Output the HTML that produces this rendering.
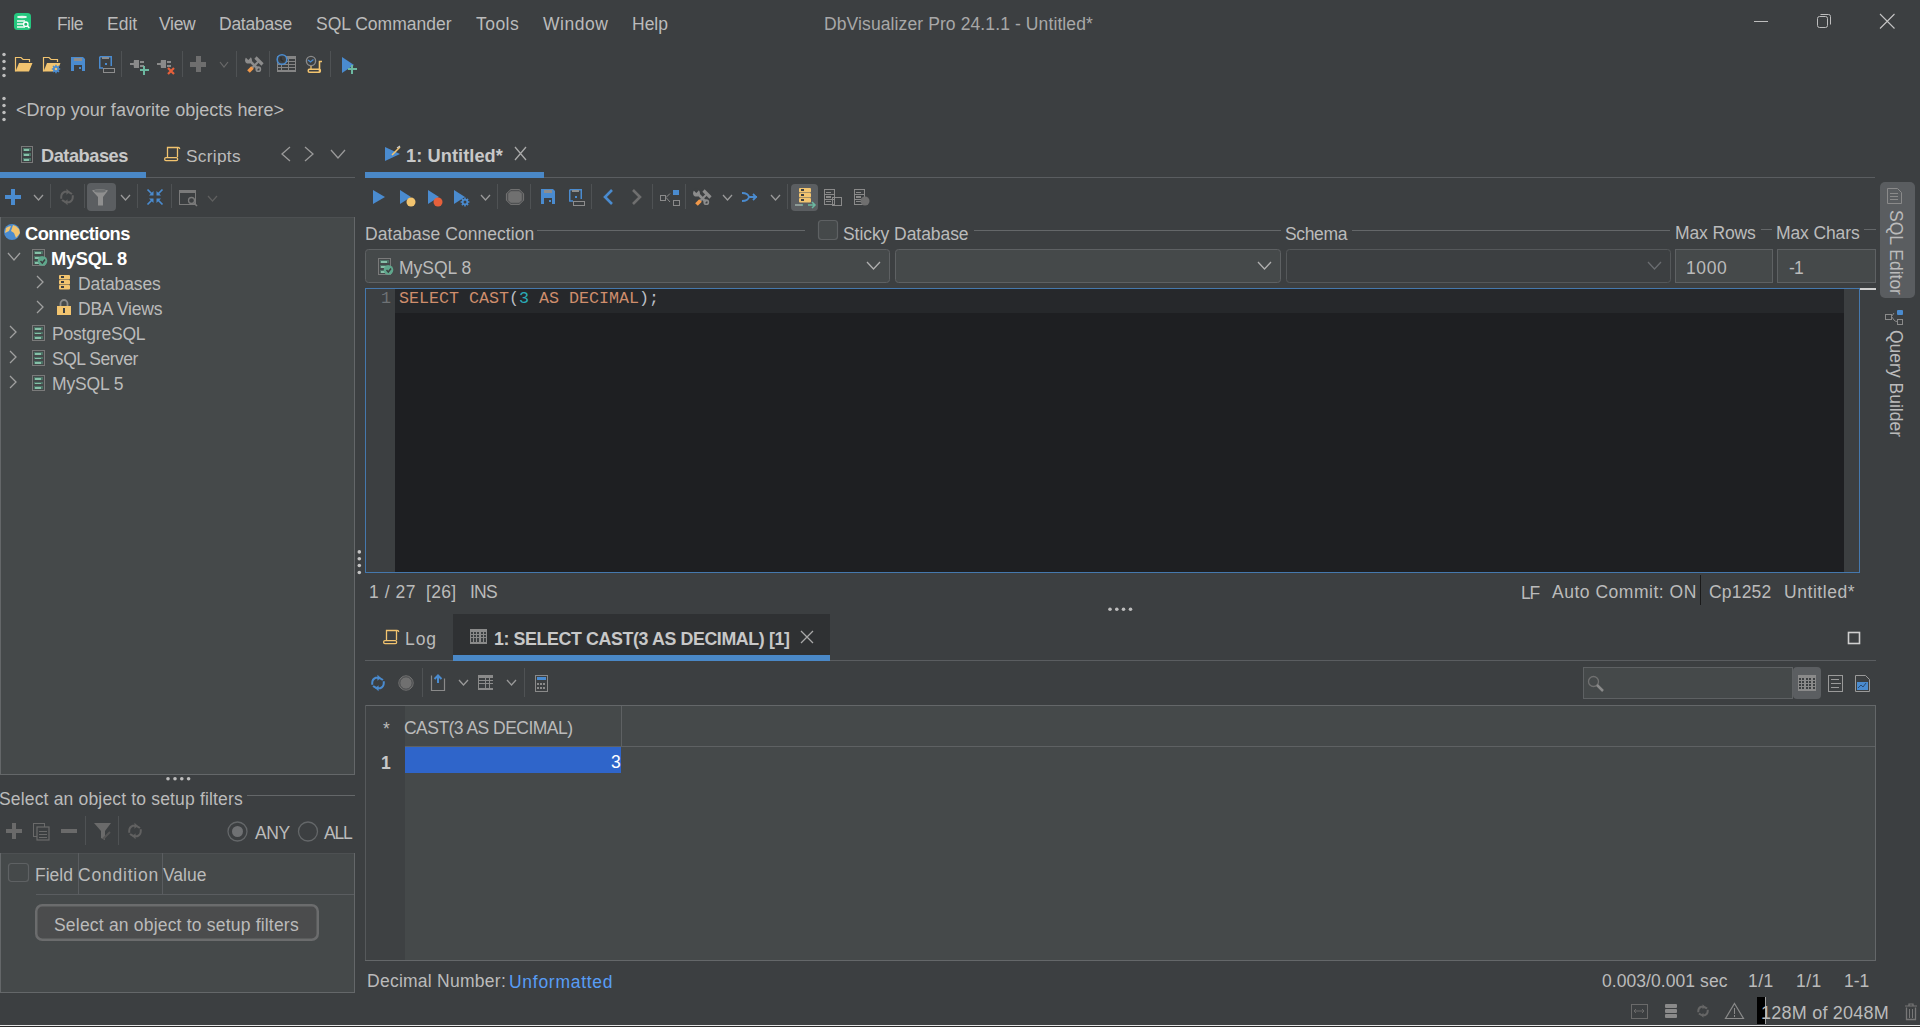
<!DOCTYPE html>
<html><head><meta charset="utf-8"><style>
*{margin:0;padding:0;box-sizing:border-box}
html,body{width:1920px;height:1027px;overflow:hidden;background:#3c3f41}
.t{position:absolute;white-space:pre;line-height:1;font-family:"Liberation Sans",sans-serif}
svg{position:absolute;left:0;top:0}
</style></head><body>
<svg width="1920" height="1027" viewBox="0 0 1920 1027">
<rect x="0" y="172" width="146" height="6" rx="0" fill="#4a88c7" shape-rendering="crispEdges"/>
<rect x="146" y="177" width="209" height="1" fill="#5a5d60" shape-rendering="crispEdges"/>
<rect x="0" y="217" width="355" height="558" rx="0" fill="#45494a" shape-rendering="crispEdges"/>
<rect x="0" y="217" width="355" height="1" fill="#4d5052" shape-rendering="crispEdges"/>
<rect x="0" y="217" width="1" height="558" fill="#646769" shape-rendering="crispEdges"/>
<rect x="354" y="217" width="1" height="558" fill="#646769" shape-rendering="crispEdges"/>
<rect x="0" y="774" width="355" height="1" fill="#646769" shape-rendering="crispEdges"/>
<rect x="247" y="795" width="108" height="1" fill="#646769" shape-rendering="crispEdges"/>
<rect x="0" y="853" width="355" height="140" rx="0" fill="#45494a" shape-rendering="crispEdges"/>
<rect x="0" y="853" width="355" height="1" fill="#4d5052" shape-rendering="crispEdges"/>
<rect x="0" y="853" width="1" height="140" fill="#646769" shape-rendering="crispEdges"/>
<rect x="354" y="853" width="1" height="140" fill="#646769" shape-rendering="crispEdges"/>
<rect x="0" y="992" width="355" height="1" fill="#646769" shape-rendering="crispEdges"/>
<rect x="36.25" y="905.25" width="281.5" height="34.5" rx="6" fill="#4b4c4d" stroke="#6b6c6d" stroke-width="2.5"/>
<rect x="365" y="172" width="179" height="6" rx="0" fill="#4a88c7" shape-rendering="crispEdges"/>
<rect x="544" y="177" width="1331" height="1" fill="#5a5d60" shape-rendering="crispEdges"/>
<rect x="365.5" y="288.5" width="1494" height="284" fill="#1e1f22" stroke="#4578ad" stroke-width="1"/>
<rect x="366" y="289" width="29" height="283" rx="0" fill="#3c3f41" shape-rendering="crispEdges"/>
<rect x="1844" y="289" width="15" height="283" rx="0" fill="#3c3f41" shape-rendering="crispEdges"/>
<rect x="395" y="289" width="1449" height="24" rx="0" fill="#26282b" shape-rendering="crispEdges"/>
<rect x="453" y="614" width="377" height="41" rx="0" fill="#2f3133" shape-rendering="crispEdges"/>
<rect x="453" y="655" width="377" height="6" rx="0" fill="#4a88c7" shape-rendering="crispEdges"/>
<rect x="365" y="660" width="88" height="1" fill="#5a5d60" shape-rendering="crispEdges"/>
<rect x="830" y="660" width="1046" height="1" fill="#5a5d60" shape-rendering="crispEdges"/>
<rect x="365" y="705" width="1511" height="256" rx="0" fill="#45494a" shape-rendering="crispEdges"/>
<rect x="365" y="705" width="1511" height="1" fill="#646769" shape-rendering="crispEdges"/>
<rect x="365" y="705" width="1" height="256" fill="#56595b" shape-rendering="crispEdges"/>
<rect x="1875" y="705" width="1" height="256" fill="#646769" shape-rendering="crispEdges"/>
<rect x="365" y="960" width="1511" height="1" fill="#646769" shape-rendering="crispEdges"/>
<rect x="366" y="706" width="39" height="254" rx="0" fill="#3e4143" shape-rendering="crispEdges"/>
<rect x="405" y="746" width="1470" height="1" fill="#5e6163" shape-rendering="crispEdges"/>
<rect x="621" y="706" width="1" height="40" fill="#5e6163" shape-rendering="crispEdges"/>
<rect x="405" y="747" width="216" height="26" rx="0" fill="#2f65ca" shape-rendering="crispEdges"/>
<rect x="1757" y="997" width="8" height="27" rx="0" fill="#000000" shape-rendering="crispEdges"/>
<rect x="1765" y="997" width="1" height="27" fill="#a0a0a0" shape-rendering="crispEdges"/>
<rect x="0" y="1025" width="1920" height="1" fill="#e6e6e6" shape-rendering="crispEdges"/>
<rect x="0" y="1026" width="1920" height="1" fill="#2b2b2b" shape-rendering="crispEdges"/>
<rect x="1880" y="182" width="35" height="116" rx="5" fill="#5a5d60"/>
<rect x="14" y="13" width="17" height="17" rx="3.5" fill="#25c77f"/>
<ellipse cx="22" cy="17" rx="5" ry="1.2" fill="#e8f8ef"/>
<rect x="17" y="20.3" width="8" height="1.3" fill="#bfeed6" shape-rendering="crispEdges"/>
<rect x="17" y="23.3" width="8" height="1.3" fill="#bfeed6" shape-rendering="crispEdges"/>
<rect x="17" y="26.3" width="8" height="1.3" fill="#bfeed6" shape-rendering="crispEdges"/>
<circle cx="25.8" cy="24.2" r="2.2" fill="#1fb56f" stroke="#ffffff" stroke-width="1.3"/>
<path d="M27.3 25.8L29.3 28" fill="none" stroke="#ffffff" stroke-width="1.5" />
<rect x="1754" y="21" width="14" height="1" fill="#bdbdbd" shape-rendering="crispEdges"/>
<rect x="1817.5" y="16.5" width="10" height="11" rx="2" fill="none" stroke="#bdbdbd" stroke-width="1"/>
<path d="M1820.5 14.5H1828.5Q1830.5 14.5 1830.5 16.5V24.5" fill="none" stroke="#bdbdbd" stroke-width="1" />
<path d="M1880 14L1894.5 28.5M1894.5 14L1880 28.5" fill="none" stroke="#c4c4c4" stroke-width="1.1" />
<circle cx="4" cy="54.5" r="1.75" fill="#bdbdbd"/>
<circle cx="4" cy="61.5" r="1.75" fill="#bdbdbd"/>
<circle cx="4" cy="68.5" r="1.75" fill="#bdbdbd"/>
<circle cx="4" cy="75.5" r="1.75" fill="#bdbdbd"/>
<path d="M15.5 71.5V57.5H21L23 59.5H29.5V62" fill="none" stroke="#f2c46f" stroke-width="1.2" />
<path d="M15.5 71.5L19 63H32.5L29 71.5Z" fill="#f2c46f" />
<path d="M43.5 71.5V57.5H49L51 59.5H57.5V62" fill="none" stroke="#f2c46f" stroke-width="1.2" />
<path d="M43.5 71.5L47 63H60.5L57 71.5Z" fill="#f2c46f" />
<circle cx="56" cy="69" r="2.2" fill="none" stroke="#4a8bcf" stroke-width="1.8"/>
<line x1="58.70" y1="69.00" x2="60.20" y2="69.00" stroke="#4a8bcf" stroke-width="1.5"/>
<line x1="57.91" y1="70.91" x2="58.97" y2="71.97" stroke="#4a8bcf" stroke-width="1.5"/>
<line x1="56.00" y1="71.70" x2="56.00" y2="73.20" stroke="#4a8bcf" stroke-width="1.5"/>
<line x1="54.09" y1="70.91" x2="53.03" y2="71.97" stroke="#4a8bcf" stroke-width="1.5"/>
<line x1="53.30" y1="69.00" x2="51.80" y2="69.00" stroke="#4a8bcf" stroke-width="1.5"/>
<line x1="54.09" y1="67.09" x2="53.03" y2="66.03" stroke="#4a8bcf" stroke-width="1.5"/>
<line x1="56.00" y1="66.30" x2="56.00" y2="64.80" stroke="#4a8bcf" stroke-width="1.5"/>
<line x1="57.91" y1="67.09" x2="58.97" y2="66.03" stroke="#4a8bcf" stroke-width="1.5"/>
<path d="M71 57H83L85 59V71H71Z" fill="#4a8bcf" />
<rect x="74" y="58" width="8" height="3" rx="0" fill="#8d8d8d" shape-rendering="crispEdges"/>
<rect x="74" y="65" width="8" height="6" rx="0" fill="#3c3f41" shape-rendering="crispEdges"/>
<rect x="79" y="67" width="2" height="2" rx="0" fill="#4a8bcf" shape-rendering="crispEdges"/>
<path d="M99.75 56.75H111.25V66M99.75 56.75V68H103" fill="none" stroke="#4a8bcf" stroke-width="1.5" />
<rect x="102" y="57" width="7" height="2" rx="0" fill="#8d8d8d" shape-rendering="crispEdges"/>
<rect x="105" y="63" width="2" height="2" rx="0" fill="#4a8bcf" shape-rendering="crispEdges"/>
<rect x="103.5" y="68.5" width="11" height="4" rx="0" fill="none" stroke="#8d8d8d" stroke-width="1"/>
<rect x="121" y="51" width="1" height="26" fill="#4f5254" shape-rendering="crispEdges"/>
<rect x="130" y="63" width="4" height="2" rx="0" fill="#8a8a8a" shape-rendering="crispEdges"/>
<path d="M134 60H139V68H134Q133 64 134 60Z" fill="#8a8a8a" />
<rect x="140" y="61" width="4" height="2" rx="0" fill="#8a8a8a" shape-rendering="crispEdges"/>
<rect x="140" y="65" width="4" height="2" rx="0" fill="#8a8a8a" shape-rendering="crispEdges"/>
<rect x="139.5" y="68.9" width="9" height="2.2" rx="0" fill="#6cb8a0" shape-rendering="crispEdges"/>
<rect x="142.9" y="65.5" width="2.2" height="9" rx="0" fill="#6cb8a0" shape-rendering="crispEdges"/>
<rect x="157" y="63" width="4" height="2" rx="0" fill="#8a8a8a" shape-rendering="crispEdges"/>
<path d="M161 60H166V68H161Q160 64 161 60Z" fill="#8a8a8a" />
<rect x="167" y="61" width="4" height="2" rx="0" fill="#8a8a8a" shape-rendering="crispEdges"/>
<rect x="167" y="65" width="4" height="2" rx="0" fill="#8a8a8a" shape-rendering="crispEdges"/>
<path d="M168 68L174 74M174 68L168 74" fill="none" stroke="#e5603b" stroke-width="2.2" />
<rect x="182" y="51" width="1" height="26" fill="#4f5254" shape-rendering="crispEdges"/>
<rect x="190.0" y="61.5" width="16" height="5" rx="0" fill="#6e6e6e" shape-rendering="crispEdges"/>
<rect x="195.5" y="56.0" width="5" height="16" rx="0" fill="#6e6e6e" shape-rendering="crispEdges"/>
<path d="M220 62L224.0 67L228 62" fill="none" stroke="#6a6a6a" stroke-width="1.2" />
<rect x="236" y="51" width="1" height="26" fill="#4f5254" shape-rendering="crispEdges"/>
<g transform="translate(-448,-133)">
<path d="M697.5 193.5L706 202" fill="none" stroke="#8c8c8c" stroke-width="2.6" />
<circle cx="696.5" cy="193.2" r="3.4" fill="#8c8c8c"/>
<path d="M693.5 190.2L696.3 193L698.8 190.5L696 187.7Z" fill="#3c3f41" />
<circle cx="706.3" cy="202.2" r="2.1" fill="none" stroke="#8c8c8c" stroke-width="1.6"/>
<path d="M703.5 190.5L710.5 197.5" fill="none" stroke="#8c8c8c" stroke-width="3.2" />
<path d="M707 194L699.5 201.5" fill="none" stroke="#8c8c8c" stroke-width="2" />
<path d="M700.5 200.5L696.5 204.5" fill="none" stroke="#f0984a" stroke-width="3.8" />
</g>
<rect x="269" y="51" width="1" height="26" fill="#4f5254" shape-rendering="crispEdges"/>
<rect x="277" y="56" width="19" height="16" rx="0" fill="#858585" shape-rendering="crispEdges"/>
<rect x="278" y="59" width="3" height="2" rx="0" fill="#3c3f41" shape-rendering="crispEdges"/>
<rect x="278" y="62" width="3" height="2" rx="0" fill="#3c3f41" shape-rendering="crispEdges"/>
<rect x="278" y="65" width="3" height="2" rx="0" fill="#3c3f41" shape-rendering="crispEdges"/>
<rect x="278" y="68" width="3" height="2" rx="0" fill="#3c3f41" shape-rendering="crispEdges"/>
<rect x="282" y="59" width="3" height="2" rx="0" fill="#3c3f41" shape-rendering="crispEdges"/>
<rect x="282" y="62" width="3" height="2" rx="0" fill="#3c3f41" shape-rendering="crispEdges"/>
<rect x="282" y="65" width="3" height="2" rx="0" fill="#3c3f41" shape-rendering="crispEdges"/>
<rect x="282" y="68" width="3" height="2" rx="0" fill="#3c3f41" shape-rendering="crispEdges"/>
<rect x="285" y="59" width="3" height="2" rx="0" fill="#3c3f41" shape-rendering="crispEdges"/>
<rect x="285" y="62" width="3" height="2" rx="0" fill="#3c3f41" shape-rendering="crispEdges"/>
<rect x="285" y="65" width="3" height="2" rx="0" fill="#3c3f41" shape-rendering="crispEdges"/>
<rect x="285" y="68" width="3" height="2" rx="0" fill="#3c3f41" shape-rendering="crispEdges"/>
<rect x="289" y="59" width="3" height="2" rx="0" fill="#3c3f41" shape-rendering="crispEdges"/>
<rect x="289" y="62" width="3" height="2" rx="0" fill="#3c3f41" shape-rendering="crispEdges"/>
<rect x="289" y="65" width="3" height="2" rx="0" fill="#3c3f41" shape-rendering="crispEdges"/>
<rect x="289" y="68" width="3" height="2" rx="0" fill="#3c3f41" shape-rendering="crispEdges"/>
<rect x="292" y="59" width="3" height="2" rx="0" fill="#3c3f41" shape-rendering="crispEdges"/>
<rect x="292" y="62" width="3" height="2" rx="0" fill="#3c3f41" shape-rendering="crispEdges"/>
<rect x="292" y="65" width="3" height="2" rx="0" fill="#3c3f41" shape-rendering="crispEdges"/>
<rect x="292" y="68" width="3" height="2" rx="0" fill="#3c3f41" shape-rendering="crispEdges"/>
<circle cx="282" cy="59.5" r="4.8" fill="#3c3f41" stroke="#4a8bcf" stroke-width="1.6"/>
<path d="M281 57V60L283.5 61.5" fill="none" stroke="#2b2b2b" stroke-width="1.2" />
<circle cx="311" cy="61" r="4.6" fill="#3c3f41" stroke="#8a8a8a" stroke-width="1.4"/>
<path d="M308 60L310.5 62L313.5 59.5" fill="none" stroke="#4a8bcf" stroke-width="1.3" />
<path d="M311 66V70" fill="none" stroke="#f2c46f" stroke-width="1.2" />
<path d="M319.5 72V61.5H322" fill="none" stroke="#f2c46f" stroke-width="1.6" />
<rect x="308.3" y="69.3" width="12" height="3" rx="1" fill="none" stroke="#f2c46f" stroke-width="1.5"/>
<rect x="330" y="51" width="1" height="26" fill="#4f5254" shape-rendering="crispEdges"/>
<path d="M342 57L354 65.0L342 73Z" fill="#4a8bcf" />
<rect x="347.5" y="67.9" width="9" height="2.2" rx="0" fill="#6cb8a0" shape-rendering="crispEdges"/>
<rect x="350.9" y="64.5" width="2.2" height="9" rx="0" fill="#6cb8a0" shape-rendering="crispEdges"/>
<circle cx="4" cy="98.5" r="1.75" fill="#bdbdbd"/>
<circle cx="4" cy="105.5" r="1.75" fill="#bdbdbd"/>
<circle cx="4" cy="112.5" r="1.75" fill="#bdbdbd"/>
<circle cx="4" cy="119.5" r="1.75" fill="#bdbdbd"/>
<rect x="21.5" y="146.5" width="11" height="16" rx="0" fill="none" stroke="#7a7a7a" stroke-width="1"/>
<rect x="22.5" y="148.0" width="8.5" height="3.0" rx="0" fill="#4c7366" shape-rendering="crispEdges"/>
<rect x="24" y="149.0" width="5" height="1.5" rx="0" fill="#86c0a8" shape-rendering="crispEdges"/>
<rect x="22.5" y="153.0" width="8.5" height="3.0" rx="0" fill="#4c7366" shape-rendering="crispEdges"/>
<rect x="24" y="154.0" width="5" height="1.5" rx="0" fill="#86c0a8" shape-rendering="crispEdges"/>
<rect x="22.5" y="158.0" width="8.5" height="3.0" rx="0" fill="#4c7366" shape-rendering="crispEdges"/>
<rect x="24" y="159.0" width="5" height="1.5" rx="0" fill="#86c0a8" shape-rendering="crispEdges"/>
<path d="M167.5 157V147.5H178Q180 147.5 179.5 149M177.5 147.5V157" fill="none" stroke="#f2c46f" stroke-width="1.3" />
<rect x="164.65" y="157.65" width="13" height="3" rx="1.3" fill="none" stroke="#f2c46f" stroke-width="1.3"/>
<path d="M290 147L282 154.0L290 161" fill="none" stroke="#9a9a9a" stroke-width="1.3" />
<path d="M305 147L313 154.0L305 161" fill="none" stroke="#9a9a9a" stroke-width="1.3" />
<path d="M331 150L338.0 158L345 150" fill="none" stroke="#9a9a9a" stroke-width="1.3" />
<rect x="5.0" y="194.75" width="16" height="4.5" rx="0" fill="#4a8bcf" shape-rendering="crispEdges"/>
<rect x="10.75" y="189.0" width="4.5" height="16" rx="0" fill="#4a8bcf" shape-rendering="crispEdges"/>
<path d="M34 195L38.5 200L43 195" fill="none" stroke="#9a9a9a" stroke-width="1.3" />
<rect x="50" y="184" width="1" height="24" fill="#4f5254" shape-rendering="crispEdges"/>
<path d="M71.95 193.975Q68.65 191.225 64.8 191.775Q61.225 193.15 61.225 197V198.65" fill="none" stroke="#616161" stroke-width="2" />
<path d="M62.05 200.025Q65.35 202.775 69.2 202.225Q72.775 200.85 72.775 197V195.35" fill="none" stroke="#616161" stroke-width="2" />
<path d="M66.45 188.75L69.75 191.775L66.45 194.8Z" fill="#616161" />
<path d="M67.55 205.25L64.25 202.225L67.55 199.2Z" fill="#616161" />
<rect x="84" y="184" width="1" height="24" fill="#4f5254" shape-rendering="crispEdges"/>
<rect x="87" y="183" width="29" height="28" rx="4" fill="#5b5e61"/>
<path d="M92 190.5Q100 188 108 190.5L103 197V205.5H98V197Z" fill="#8f8f8f" />
<ellipse cx="100" cy="191" rx="6" ry="1.6" fill="#6d7072"/>
<path d="M121 195L125.5 200L130 195" fill="none" stroke="#9a9a9a" stroke-width="1.3" />
<rect x="137" y="184" width="1" height="24" fill="#4f5254" shape-rendering="crispEdges"/>
<path d="M147.5 189.5L152.0 194.0" fill="none" stroke="#4a8bcf" stroke-width="1.7" />
<path d="M153.5 191.0V195.5H149.0Z" fill="#4a8bcf" />
<path d="M162.5 189.5L158.0 194.0" fill="none" stroke="#4a8bcf" stroke-width="1.7" />
<path d="M156.5 191.0V195.5H161.0Z" fill="#4a8bcf" />
<path d="M147.5 204.5L152.0 200.0" fill="none" stroke="#4a8bcf" stroke-width="1.7" />
<path d="M153.5 203.0V198.5H149.0Z" fill="#4a8bcf" />
<path d="M162.5 204.5L158.0 200.0" fill="none" stroke="#4a8bcf" stroke-width="1.7" />
<path d="M156.5 203.0V198.5H161.0Z" fill="#4a8bcf" />
<rect x="171" y="184" width="1" height="24" fill="#4f5254" shape-rendering="crispEdges"/>
<rect x="179.5" y="190.5" width="16" height="14" rx="0" fill="none" stroke="#7a7a7a" stroke-width="1"/>
<rect x="179" y="190" width="17" height="3" rx="0" fill="#7a7a7a" shape-rendering="crispEdges"/>
<circle cx="191.5" cy="200.5" r="3" fill="#3c3f41" stroke="#7a7a7a" stroke-width="1.3"/>
<path d="M193.5 202.5L197 206" fill="none" stroke="#7a7a7a" stroke-width="1.6" />
<path d="M208 196L212.5 201L217 196" fill="none" stroke="#5f5f5f" stroke-width="1.2" />
<circle cx="12" cy="232" r="8" fill="#4a8bcf"/>
<path d="M13 225Q17 226 19 229L20 233Q18 236 16 238L14 233L11 231Z" fill="#f2c46f" />
<path d="M6 228Q9 226 11 226L9 231L5 233Z" fill="#f2c46f" />
<path d="M8 253L14.0 260L20 253" fill="none" stroke="#a0a0a0" stroke-width="1.3" />
<rect x="32.5" y="249.5" width="12" height="16" rx="0" fill="none" stroke="#7a7a7a" stroke-width="1"/>
<rect x="33.5" y="251.0" width="9.5" height="3.0" rx="0" fill="#4c7366" shape-rendering="crispEdges"/>
<rect x="35" y="252.0" width="6" height="1.5" rx="0" fill="#86c0a8" shape-rendering="crispEdges"/>
<rect x="33.5" y="256.0" width="9.5" height="3.0" rx="0" fill="#4c7366" shape-rendering="crispEdges"/>
<rect x="35" y="257.0" width="6" height="1.5" rx="0" fill="#86c0a8" shape-rendering="crispEdges"/>
<rect x="33.5" y="261.0" width="9.5" height="3.0" rx="0" fill="#4c7366" shape-rendering="crispEdges"/>
<rect x="35" y="262.0" width="6" height="1.5" rx="0" fill="#86c0a8" shape-rendering="crispEdges"/>
<circle cx="42.5" cy="261" r="4.8" fill="#5fa78c"/>
<path d="M40.5 261L42.3 263L45 259.5" fill="none" stroke="#3c3f41" stroke-width="1.5" />
<path d="M37 276L43 282.0L37 288" fill="none" stroke="#a0a0a0" stroke-width="1.3" />
<rect x="59" y="275" width="11" height="4.5" rx="1" fill="#f2c46f"/>
<rect x="61" y="276.2" width="3" height="2" rx="0" fill="#3c3f41" shape-rendering="crispEdges"/>
<rect x="59" y="280" width="11" height="4.5" rx="1" fill="#f2c46f"/>
<rect x="61" y="281.2" width="3" height="2" rx="0" fill="#3c3f41" shape-rendering="crispEdges"/>
<rect x="59" y="285" width="11" height="4.5" rx="1" fill="#f2c46f"/>
<rect x="61" y="286.2" width="3" height="2" rx="0" fill="#3c3f41" shape-rendering="crispEdges"/>
<path d="M37 301L43 307.0L37 313" fill="none" stroke="#a0a0a0" stroke-width="1.3" />
<path d="M60.5 306V303.5A3.5 3.5 0 0 1 67.5 303.5V306" fill="none" stroke="#8a8a8a" stroke-width="1.8" />
<rect x="57" y="306" width="14" height="9" rx="0" fill="#f2c46f" shape-rendering="crispEdges"/>
<rect x="63" y="308" width="2" height="5" rx="0" fill="#3c3f41" shape-rendering="crispEdges"/>
<path d="M10 326L16 332.0L10 338" fill="none" stroke="#a0a0a0" stroke-width="1.3" />
<rect x="32.5" y="325.5" width="12" height="15" rx="0" fill="none" stroke="#7a7a7a" stroke-width="1"/>
<rect x="33.5" y="327.0" width="9.5" height="2.666666666666667" rx="0" fill="#4c7366" shape-rendering="crispEdges"/>
<rect x="35" y="328.0" width="6" height="1.5" rx="0" fill="#86c0a8" shape-rendering="crispEdges"/>
<rect x="33.5" y="331.6666666666667" width="9.5" height="2.666666666666667" rx="0" fill="#4c7366" shape-rendering="crispEdges"/>
<rect x="35" y="332.6666666666667" width="6" height="1.5" rx="0" fill="#86c0a8" shape-rendering="crispEdges"/>
<rect x="33.5" y="336.3333333333333" width="9.5" height="2.666666666666667" rx="0" fill="#4c7366" shape-rendering="crispEdges"/>
<rect x="35" y="337.3333333333333" width="6" height="1.5" rx="0" fill="#86c0a8" shape-rendering="crispEdges"/>
<path d="M10 351L16 357.0L10 363" fill="none" stroke="#a0a0a0" stroke-width="1.3" />
<rect x="32.5" y="350.5" width="12" height="15" rx="0" fill="none" stroke="#7a7a7a" stroke-width="1"/>
<rect x="33.5" y="352.0" width="9.5" height="2.666666666666667" rx="0" fill="#4c7366" shape-rendering="crispEdges"/>
<rect x="35" y="353.0" width="6" height="1.5" rx="0" fill="#86c0a8" shape-rendering="crispEdges"/>
<rect x="33.5" y="356.6666666666667" width="9.5" height="2.666666666666667" rx="0" fill="#4c7366" shape-rendering="crispEdges"/>
<rect x="35" y="357.6666666666667" width="6" height="1.5" rx="0" fill="#86c0a8" shape-rendering="crispEdges"/>
<rect x="33.5" y="361.3333333333333" width="9.5" height="2.666666666666667" rx="0" fill="#4c7366" shape-rendering="crispEdges"/>
<rect x="35" y="362.3333333333333" width="6" height="1.5" rx="0" fill="#86c0a8" shape-rendering="crispEdges"/>
<path d="M10 376L16 382.0L10 388" fill="none" stroke="#a0a0a0" stroke-width="1.3" />
<rect x="32.5" y="375.5" width="12" height="15" rx="0" fill="none" stroke="#7a7a7a" stroke-width="1"/>
<rect x="33.5" y="377.0" width="9.5" height="2.666666666666667" rx="0" fill="#4c7366" shape-rendering="crispEdges"/>
<rect x="35" y="378.0" width="6" height="1.5" rx="0" fill="#86c0a8" shape-rendering="crispEdges"/>
<rect x="33.5" y="381.6666666666667" width="9.5" height="2.666666666666667" rx="0" fill="#4c7366" shape-rendering="crispEdges"/>
<rect x="35" y="382.6666666666667" width="6" height="1.5" rx="0" fill="#86c0a8" shape-rendering="crispEdges"/>
<rect x="33.5" y="386.3333333333333" width="9.5" height="2.666666666666667" rx="0" fill="#4c7366" shape-rendering="crispEdges"/>
<rect x="35" y="387.3333333333333" width="6" height="1.5" rx="0" fill="#86c0a8" shape-rendering="crispEdges"/>
<circle cx="168" cy="778.8" r="1.8" fill="#bdbdbd"/>
<circle cx="175" cy="778.8" r="1.8" fill="#bdbdbd"/>
<circle cx="181.8" cy="778.8" r="1.8" fill="#bdbdbd"/>
<circle cx="188.6" cy="778.8" r="1.8" fill="#bdbdbd"/>
<rect x="6.0" y="828.75" width="16" height="4.5" rx="0" fill="#6a6a6a" shape-rendering="crispEdges"/>
<rect x="11.75" y="823.0" width="4.5" height="16" rx="0" fill="#6a6a6a" shape-rendering="crispEdges"/>
<rect x="33.5" y="823.5" width="11" height="13" rx="0" fill="none" stroke="#6a6a6a" stroke-width="1"/>
<rect x="37" y="827" width="12" height="13" fill="#3c3f41" stroke="#6a6a6a" stroke-width="1.2"/>
<rect x="39" y="831" width="8" height="1" fill="#6a6a6a" shape-rendering="crispEdges"/>
<rect x="39" y="834" width="8" height="1" fill="#6a6a6a" shape-rendering="crispEdges"/>
<rect x="39" y="837" width="8" height="1" fill="#6a6a6a" shape-rendering="crispEdges"/>
<rect x="61" y="829" width="16" height="4" rx="0" fill="#6a6a6a" shape-rendering="crispEdges"/>
<rect x="85" y="816" width="1" height="29" fill="#4f5254" shape-rendering="crispEdges"/>
<path d="M94 823H111L105 831V840L101 838V831Z" fill="#6a6a6a" />
<path d="M103 839L110 832" fill="none" stroke="#555" stroke-width="2" />
<rect x="118" y="816" width="1" height="29" fill="#4f5254" shape-rendering="crispEdges"/>
<path d="M139.95 827.975Q136.65 825.225 132.8 825.775Q129.225 827.15 129.225 831V832.65" fill="none" stroke="#616161" stroke-width="2" />
<path d="M130.05 834.025Q133.35 836.775 137.2 836.225Q140.775 834.85 140.775 831V829.35" fill="none" stroke="#616161" stroke-width="2" />
<path d="M134.45 822.75L137.75 825.775L134.45 828.8Z" fill="#616161" />
<path d="M135.55 839.25L132.25 836.225L135.55 833.2Z" fill="#616161" />
<circle cx="237.5" cy="831.5" r="9.5" fill="none" stroke="#646769" stroke-width="1.3"/>
<circle cx="237.5" cy="831.5" r="5.5" fill="#6f7173"/>
<circle cx="308" cy="831.5" r="9.5" fill="none" stroke="#646769" stroke-width="1.3"/>
<rect x="8.5" y="863.5" width="20" height="18" rx="3" fill="#45494a" stroke="#5e6163" stroke-width="1.2"/>
<rect x="78" y="853" width="1" height="41" fill="#5a5d60" shape-rendering="crispEdges"/>
<rect x="162" y="853" width="1" height="41" fill="#5a5d60" shape-rendering="crispEdges"/>
<rect x="36" y="894" width="318" height="1" fill="#5a5d60" shape-rendering="crispEdges"/>
<path d="M385 147L400 154L385 161Z" fill="#4a8bcf" />
<path d="M392 155L400 147" fill="none" stroke="#f2c46f" stroke-width="1.6" />
<path d="M397 148L400 146" fill="none" stroke="#cfcfcf" stroke-width="1.2" />
<path d="M515 147L526 160M526 147L515 160" fill="none" stroke="#a9a9a9" stroke-width="1.3" />
<path d="M373 190L385 197.0L373 204Z" fill="#4a8bcf" />
<path d="M400 190L411 197.0L400 204Z" fill="#4a8bcf" />
<circle cx="411" cy="202" r="4.5" fill="#f2c46f"/>
<path d="M428 190L439 197.0L428 204Z" fill="#4a8bcf" />
<circle cx="438" cy="202" r="4.5" fill="#e5603b"/>
<path d="M454 190L465 197.0L454 204Z" fill="#4a8bcf" />
<circle cx="465" cy="202" r="2.4" fill="none" stroke="#4a8bcf" stroke-width="1.8"/>
<line x1="467.90" y1="202.00" x2="469.40" y2="202.00" stroke="#4a8bcf" stroke-width="1.5"/>
<line x1="467.05" y1="204.05" x2="468.11" y2="205.11" stroke="#4a8bcf" stroke-width="1.5"/>
<line x1="465.00" y1="204.90" x2="465.00" y2="206.40" stroke="#4a8bcf" stroke-width="1.5"/>
<line x1="462.95" y1="204.05" x2="461.89" y2="205.11" stroke="#4a8bcf" stroke-width="1.5"/>
<line x1="462.10" y1="202.00" x2="460.60" y2="202.00" stroke="#4a8bcf" stroke-width="1.5"/>
<line x1="462.95" y1="199.95" x2="461.89" y2="198.89" stroke="#4a8bcf" stroke-width="1.5"/>
<line x1="465.00" y1="199.10" x2="465.00" y2="197.60" stroke="#4a8bcf" stroke-width="1.5"/>
<line x1="467.05" y1="199.95" x2="468.11" y2="198.89" stroke="#4a8bcf" stroke-width="1.5"/>
<path d="M481 195L485.5 200L490 195" fill="none" stroke="#9a9a9a" stroke-width="1.3" />
<rect x="497" y="184" width="1" height="25" fill="#4f5254" shape-rendering="crispEdges"/>
<path d="M511 189.5H519L523.5 194V200L519 204.5H511L506.5 200V194Z" fill="#707070" stroke="#707070" stroke-width="1.2"/>
<path d="M510.7 190.7H519.3L522.3 193.7V200.3L519.3 203.3H510.7L507.7 200.3V193.7Z" fill="#707070" stroke="#3c3f41" stroke-width="0.8"/>
<rect x="530" y="184" width="1" height="25" fill="#4f5254" shape-rendering="crispEdges"/>
<path d="M541 189H553L555 191V204H541Z" fill="#4a8bcf" />
<rect x="544" y="190" width="8" height="3" rx="0" fill="#8d8d8d" shape-rendering="crispEdges"/>
<rect x="544" y="198" width="8" height="6" rx="0" fill="#3c3f41" shape-rendering="crispEdges"/>
<rect x="549" y="200" width="2" height="2" rx="0" fill="#4a8bcf" shape-rendering="crispEdges"/>
<path d="M569.75 189.75H581.25V199M569.75 189.75V201H573" fill="none" stroke="#4a8bcf" stroke-width="1.5" />
<rect x="572" y="190" width="7" height="2" rx="0" fill="#8d8d8d" shape-rendering="crispEdges"/>
<rect x="575" y="196" width="2" height="2" rx="0" fill="#4a8bcf" shape-rendering="crispEdges"/>
<rect x="573.5" y="201.5" width="11" height="4" rx="0" fill="none" stroke="#8d8d8d" stroke-width="1"/>
<rect x="591" y="184" width="1" height="25" fill="#4f5254" shape-rendering="crispEdges"/>
<path d="M612 190L605 197L612 204" fill="none" stroke="#4a8bcf" stroke-width="2.6" />
<path d="M633 190L640 197L633 204" fill="none" stroke="#6f6f6f" stroke-width="2.6" />
<rect x="652" y="184" width="1" height="25" fill="#4f5254" shape-rendering="crispEdges"/>
<rect x="660.5" y="195.5" width="5" height="5" rx="0" fill="none" stroke="#8a8a8a" stroke-width="1"/>
<rect x="673" y="190" width="6" height="5" rx="0" fill="#4a8bcf" shape-rendering="crispEdges"/>
<rect x="673.5" y="200.5" width="6" height="5" rx="0" fill="none" stroke="#8a8a8a" stroke-width="1"/>
<path d="M666 197.5L670 193.5M666 197.5L670 202" fill="none" stroke="#8a8a8a" stroke-width="1" />
<rect x="685" y="184" width="1" height="25" fill="#4f5254" shape-rendering="crispEdges"/>
<g transform="translate(0,0)">
<path d="M697.5 193.5L706 202" fill="none" stroke="#8c8c8c" stroke-width="2.6" />
<circle cx="696.5" cy="193.2" r="3.4" fill="#8c8c8c"/>
<path d="M693.5 190.2L696.3 193L698.8 190.5L696 187.7Z" fill="#3c3f41" />
<circle cx="706.3" cy="202.2" r="2.1" fill="none" stroke="#8c8c8c" stroke-width="1.6"/>
<path d="M703.5 190.5L710.5 197.5" fill="none" stroke="#8c8c8c" stroke-width="3.2" />
<path d="M707 194L699.5 201.5" fill="none" stroke="#8c8c8c" stroke-width="2" />
<path d="M700.5 200.5L696.5 204.5" fill="none" stroke="#f0984a" stroke-width="3.8" />
</g>
<path d="M723 195L727.5 200L732 195" fill="none" stroke="#9a9a9a" stroke-width="1.3" />
<path d="M742 193Q748 193 749 197Q748 201 742 201M749 197H757M753 194L756 197L753 200" fill="none" stroke="#4a8bcf" stroke-width="1.8" />
<path d="M771 195L775.5 200L780 195" fill="none" stroke="#9a9a9a" stroke-width="1.3" />
<rect x="787" y="184" width="1" height="25" fill="#4f5254" shape-rendering="crispEdges"/>
<rect x="791" y="184" width="27" height="27" rx="4" fill="#5b5e61"/>
<rect x="799" y="188" width="12" height="4.5" rx="1" fill="#f2c46f"/>
<rect x="801" y="189.2" width="3" height="2" rx="0" fill="#3c3f41" shape-rendering="crispEdges"/>
<rect x="799" y="193" width="12" height="4.5" rx="1" fill="#f2c46f"/>
<rect x="801" y="194.2" width="3" height="2" rx="0" fill="#3c3f41" shape-rendering="crispEdges"/>
<rect x="799" y="198" width="12" height="4.5" rx="1" fill="#f2c46f"/>
<rect x="801" y="199.2" width="3" height="2" rx="0" fill="#3c3f41" shape-rendering="crispEdges"/>
<path d="M795 205H803M808 205H815M812 202L815 205L812 208" fill="none" stroke="#6cb8a0" stroke-width="1.5" />
<path d="M795 205H802" fill="none" stroke="#9a9a9a" stroke-width="1.5" />
<rect x="824.5" y="189.5" width="10" height="15" rx="0" fill="none" stroke="#8a8a8a" stroke-width="1"/>
<rect x="824" y="194" width="10" height="1" fill="#8a8a8a" shape-rendering="crispEdges"/>
<rect x="826" y="191.5" width="5" height="1.5" rx="0" fill="#8a8a8a" shape-rendering="crispEdges"/>
<rect x="824" y="199" width="10" height="1" fill="#8a8a8a" shape-rendering="crispEdges"/>
<rect x="826" y="196.16666666666666" width="5" height="1.5" rx="0" fill="#8a8a8a" shape-rendering="crispEdges"/>
<rect x="824" y="204" width="10" height="1" fill="#8a8a8a" shape-rendering="crispEdges"/>
<rect x="826" y="200.83333333333334" width="5" height="1.5" rx="0" fill="#8a8a8a" shape-rendering="crispEdges"/>
<rect x="832.5" y="197.5" width="9" height="8" rx="0" fill="none" stroke="#8a8a8a" stroke-width="1"/>
<rect x="854.5" y="189.5" width="10" height="15" rx="0" fill="none" stroke="#8a8a8a" stroke-width="1"/>
<rect x="854" y="194" width="10" height="1" fill="#8a8a8a" shape-rendering="crispEdges"/>
<rect x="856" y="191.5" width="5" height="1.5" rx="0" fill="#8a8a8a" shape-rendering="crispEdges"/>
<rect x="854" y="199" width="10" height="1" fill="#8a8a8a" shape-rendering="crispEdges"/>
<rect x="856" y="196.16666666666666" width="5" height="1.5" rx="0" fill="#8a8a8a" shape-rendering="crispEdges"/>
<rect x="854" y="204" width="10" height="1" fill="#8a8a8a" shape-rendering="crispEdges"/>
<rect x="856" y="200.83333333333334" width="5" height="1.5" rx="0" fill="#8a8a8a" shape-rendering="crispEdges"/>
<circle cx="865" cy="201" r="4.5" fill="#6f6f6f"/>
<rect x="365.5" y="249.5" width="524" height="33" rx="3" fill="#45494a" stroke="#5e6163" stroke-width="1"/>
<rect x="895.5" y="249.5" width="385" height="33" rx="3" fill="#45494a" stroke="#5e6163" stroke-width="1"/>
<rect x="1286.5" y="249.5" width="384" height="33" rx="3" fill="#3c3f41" stroke="#55585a" stroke-width="1"/>
<rect x="1675.5" y="249.5" width="97" height="33" fill="#45494a" stroke="#5e6163" stroke-width="1"/>
<rect x="1777.5" y="249.5" width="98" height="33" fill="#45494a" stroke="#5e6163" stroke-width="1"/>
<path d="M867 262L873.5 269L880 262" fill="none" stroke="#b0b0b0" stroke-width="1.3" />
<path d="M1258 262L1264.5 269L1271 262" fill="none" stroke="#b0b0b0" stroke-width="1.3" />
<path d="M1648 262L1654.5 269L1661 262" fill="none" stroke="#6a6d70" stroke-width="1.3" />
<rect x="378.5" y="258.5" width="12" height="16" rx="0" fill="none" stroke="#7a7a7a" stroke-width="1"/>
<rect x="379.5" y="260.0" width="9.5" height="3.0" rx="0" fill="#4c7366" shape-rendering="crispEdges"/>
<rect x="381" y="261.0" width="6" height="1.5" rx="0" fill="#86c0a8" shape-rendering="crispEdges"/>
<rect x="379.5" y="265.0" width="9.5" height="3.0" rx="0" fill="#4c7366" shape-rendering="crispEdges"/>
<rect x="381" y="266.0" width="6" height="1.5" rx="0" fill="#86c0a8" shape-rendering="crispEdges"/>
<rect x="379.5" y="270.0" width="9.5" height="3.0" rx="0" fill="#4c7366" shape-rendering="crispEdges"/>
<rect x="381" y="271.0" width="6" height="1.5" rx="0" fill="#86c0a8" shape-rendering="crispEdges"/>
<circle cx="388.5" cy="270" r="4.8" fill="#5fa78c"/>
<path d="M386.5 270L388.3 272L391 268.5" fill="none" stroke="#3c3f41" stroke-width="1.5" />
<rect x="537" y="230" width="268" height="1" fill="#646769" shape-rendering="crispEdges"/>
<rect x="974" y="230" width="307" height="1" fill="#646769" shape-rendering="crispEdges"/>
<rect x="1352" y="230" width="318" height="1" fill="#646769" shape-rendering="crispEdges"/>
<rect x="1761" y="229" width="11" height="1" fill="#646769" shape-rendering="crispEdges"/>
<rect x="1864" y="229" width="12" height="1" fill="#646769" shape-rendering="crispEdges"/>
<rect x="818.5" y="220.5" width="19" height="19" rx="3" fill="#45494a" stroke="#5e6163" stroke-width="1.2"/>
<rect x="1860" y="288" width="16" height="2" rx="0" fill="#cfcfcf" shape-rendering="crispEdges"/>
<rect x="1859" y="289" width="1" height="284" fill="#4578ad" shape-rendering="crispEdges"/>
<circle cx="359.3" cy="551.9" r="1.8" fill="#c4c4c4"/>
<circle cx="359.3" cy="558.7" r="1.8" fill="#c4c4c4"/>
<circle cx="359.3" cy="565.5" r="1.8" fill="#c4c4c4"/>
<circle cx="359.3" cy="572.5" r="1.8" fill="#c4c4c4"/>
<circle cx="1110" cy="609.2" r="1.8" fill="#bdbdbd"/>
<circle cx="1116.8" cy="609.2" r="1.8" fill="#bdbdbd"/>
<circle cx="1123.5" cy="609.2" r="1.8" fill="#bdbdbd"/>
<circle cx="1130.5" cy="609.2" r="1.8" fill="#bdbdbd"/>
<rect x="1700" y="575" width="1" height="30" fill="#1a1a1a" shape-rendering="crispEdges"/>
<path d="M386.5 640V630.5H397Q399 630.5 398.5 632M396.5 630.5V640" fill="none" stroke="#f2c46f" stroke-width="1.3" />
<rect x="383.65" y="640.65" width="13" height="3" rx="1.3" fill="none" stroke="#f2c46f" stroke-width="1.3"/>
<rect x="470" y="629" width="17" height="15" rx="0" fill="#8a8a8a" shape-rendering="crispEdges"/>
<rect x="471" y="632" width="2" height="2" rx="0" fill="#3c3f41" shape-rendering="crispEdges"/>
<rect x="471" y="635" width="2" height="2" rx="0" fill="#3c3f41" shape-rendering="crispEdges"/>
<rect x="471" y="638" width="2" height="2" rx="0" fill="#3c3f41" shape-rendering="crispEdges"/>
<rect x="471" y="640" width="2" height="2" rx="0" fill="#3c3f41" shape-rendering="crispEdges"/>
<rect x="474" y="632" width="2" height="2" rx="0" fill="#3c3f41" shape-rendering="crispEdges"/>
<rect x="474" y="635" width="2" height="2" rx="0" fill="#3c3f41" shape-rendering="crispEdges"/>
<rect x="474" y="638" width="2" height="2" rx="0" fill="#3c3f41" shape-rendering="crispEdges"/>
<rect x="474" y="640" width="2" height="2" rx="0" fill="#3c3f41" shape-rendering="crispEdges"/>
<rect x="477" y="632" width="2" height="2" rx="0" fill="#3c3f41" shape-rendering="crispEdges"/>
<rect x="477" y="635" width="2" height="2" rx="0" fill="#3c3f41" shape-rendering="crispEdges"/>
<rect x="477" y="638" width="2" height="2" rx="0" fill="#3c3f41" shape-rendering="crispEdges"/>
<rect x="477" y="640" width="2" height="2" rx="0" fill="#3c3f41" shape-rendering="crispEdges"/>
<rect x="481" y="632" width="2" height="2" rx="0" fill="#3c3f41" shape-rendering="crispEdges"/>
<rect x="481" y="635" width="2" height="2" rx="0" fill="#3c3f41" shape-rendering="crispEdges"/>
<rect x="481" y="638" width="2" height="2" rx="0" fill="#3c3f41" shape-rendering="crispEdges"/>
<rect x="481" y="640" width="2" height="2" rx="0" fill="#3c3f41" shape-rendering="crispEdges"/>
<rect x="484" y="632" width="2" height="2" rx="0" fill="#3c3f41" shape-rendering="crispEdges"/>
<rect x="484" y="635" width="2" height="2" rx="0" fill="#3c3f41" shape-rendering="crispEdges"/>
<rect x="484" y="638" width="2" height="2" rx="0" fill="#3c3f41" shape-rendering="crispEdges"/>
<rect x="484" y="640" width="2" height="2" rx="0" fill="#3c3f41" shape-rendering="crispEdges"/>
<path d="M801 631L813 643M813 631L801 643" fill="none" stroke="#a9a9a9" stroke-width="1.3" />
<rect x="1848.5" y="632.5" width="11" height="11" fill="none" stroke="#cfcfcf" stroke-width="1.6"/>
<path d="M382.95 679.975Q379.65 677.225 375.8 677.775Q372.225 679.15 372.225 683V684.65" fill="none" stroke="#4a8bcf" stroke-width="2" />
<path d="M373.05 686.025Q376.35 688.775 380.2 688.225Q383.775 686.85 383.775 683V681.35" fill="none" stroke="#4a8bcf" stroke-width="2" />
<path d="M377.45 674.75L380.75 677.775L377.45 680.8Z" fill="#4a8bcf" />
<path d="M378.55 691.25L375.25 688.225L378.55 685.2Z" fill="#4a8bcf" />
<circle cx="406" cy="683" r="7.2" fill="#707070" stroke="#707070" stroke-width="1"/>
<circle cx="406" cy="683" r="6.2" fill="none" stroke="#3c3f41" stroke-width="0.8"/>
<rect x="422" y="668" width="1" height="29" fill="#4f5254" shape-rendering="crispEdges"/>
<path d="M431.5 675.5V690.5H444.5V678.5" fill="none" stroke="#8a8a8a" stroke-width="1.2" />
<path d="M438 683V676M434.5 679L438 675.5L441.5 679" fill="none" stroke="#4a8bcf" stroke-width="2" />
<path d="M459 680L463.5 685L468 680" fill="none" stroke="#9a9a9a" stroke-width="1.3" />
<rect x="478" y="675" width="15" height="15" rx="0" fill="#8a8a8a" shape-rendering="crispEdges"/>
<rect x="479" y="678" width="3" height="2" rx="0" fill="#3c3f41" shape-rendering="crispEdges"/>
<rect x="479" y="681" width="3" height="2" rx="0" fill="#3c3f41" shape-rendering="crispEdges"/>
<rect x="479" y="684" width="3" height="2" rx="0" fill="#3c3f41" shape-rendering="crispEdges"/>
<rect x="479" y="686" width="3" height="2" rx="0" fill="#3c3f41" shape-rendering="crispEdges"/>
<rect x="482" y="678" width="3" height="2" rx="0" fill="#3c3f41" shape-rendering="crispEdges"/>
<rect x="482" y="681" width="3" height="2" rx="0" fill="#3c3f41" shape-rendering="crispEdges"/>
<rect x="482" y="684" width="3" height="2" rx="0" fill="#3c3f41" shape-rendering="crispEdges"/>
<rect x="482" y="686" width="3" height="2" rx="0" fill="#3c3f41" shape-rendering="crispEdges"/>
<rect x="486" y="678" width="3" height="2" rx="0" fill="#3c3f41" shape-rendering="crispEdges"/>
<rect x="486" y="681" width="3" height="2" rx="0" fill="#3c3f41" shape-rendering="crispEdges"/>
<rect x="486" y="684" width="3" height="2" rx="0" fill="#3c3f41" shape-rendering="crispEdges"/>
<rect x="486" y="686" width="3" height="2" rx="0" fill="#3c3f41" shape-rendering="crispEdges"/>
<rect x="490" y="678" width="3" height="2" rx="0" fill="#3c3f41" shape-rendering="crispEdges"/>
<rect x="490" y="681" width="3" height="2" rx="0" fill="#3c3f41" shape-rendering="crispEdges"/>
<rect x="490" y="684" width="3" height="2" rx="0" fill="#3c3f41" shape-rendering="crispEdges"/>
<rect x="490" y="686" width="3" height="2" rx="0" fill="#3c3f41" shape-rendering="crispEdges"/>
<path d="M507 680L511.5 685L516 680" fill="none" stroke="#9a9a9a" stroke-width="1.3" />
<rect x="524" y="668" width="1" height="29" fill="#4f5254" shape-rendering="crispEdges"/>
<rect x="535.5" y="675.5" width="12" height="16" rx="0" fill="none" stroke="#8a8a8a" stroke-width="1"/>
<rect x="537" y="677" width="9" height="3" rx="0" fill="#4a8bcf" shape-rendering="crispEdges"/>
<rect x="537" y="683" width="2" height="2" rx="0" fill="#8a8a8a" shape-rendering="crispEdges"/>
<rect x="540" y="683" width="2" height="2" rx="0" fill="#8a8a8a" shape-rendering="crispEdges"/>
<rect x="543" y="683" width="2" height="2" rx="0" fill="#8a8a8a" shape-rendering="crispEdges"/>
<rect x="537" y="687" width="2" height="2" rx="0" fill="#8a8a8a" shape-rendering="crispEdges"/>
<rect x="540" y="687" width="2" height="2" rx="0" fill="#8a8a8a" shape-rendering="crispEdges"/>
<rect x="543" y="687" width="2" height="2" rx="0" fill="#8a8a8a" shape-rendering="crispEdges"/>
<rect x="1583.5" y="667.5" width="209" height="31" fill="#45494a" stroke="#5e6163" stroke-width="1"/>
<circle cx="1593.5" cy="681.5" r="5" fill="none" stroke="#707070" stroke-width="1.3"/>
<path d="M1597 685L1603 691" fill="none" stroke="#8a8a8a" stroke-width="2.5" />
<rect x="1793" y="667" width="28" height="32" rx="4" fill="#5b5e61"/>
<rect x="1798" y="675" width="18" height="16" rx="0" fill="#8a8a8a" shape-rendering="crispEdges"/>
<rect x="1799" y="678" width="2" height="2" rx="0" fill="#3c3f41" shape-rendering="crispEdges"/>
<rect x="1799" y="681" width="2" height="2" rx="0" fill="#3c3f41" shape-rendering="crispEdges"/>
<rect x="1799" y="684" width="2" height="2" rx="0" fill="#3c3f41" shape-rendering="crispEdges"/>
<rect x="1799" y="687" width="2" height="2" rx="0" fill="#3c3f41" shape-rendering="crispEdges"/>
<rect x="1802" y="678" width="2" height="2" rx="0" fill="#3c3f41" shape-rendering="crispEdges"/>
<rect x="1802" y="681" width="2" height="2" rx="0" fill="#3c3f41" shape-rendering="crispEdges"/>
<rect x="1802" y="684" width="2" height="2" rx="0" fill="#3c3f41" shape-rendering="crispEdges"/>
<rect x="1802" y="687" width="2" height="2" rx="0" fill="#3c3f41" shape-rendering="crispEdges"/>
<rect x="1806" y="678" width="2" height="2" rx="0" fill="#3c3f41" shape-rendering="crispEdges"/>
<rect x="1806" y="681" width="2" height="2" rx="0" fill="#3c3f41" shape-rendering="crispEdges"/>
<rect x="1806" y="684" width="2" height="2" rx="0" fill="#3c3f41" shape-rendering="crispEdges"/>
<rect x="1806" y="687" width="2" height="2" rx="0" fill="#3c3f41" shape-rendering="crispEdges"/>
<rect x="1809" y="678" width="2" height="2" rx="0" fill="#3c3f41" shape-rendering="crispEdges"/>
<rect x="1809" y="681" width="2" height="2" rx="0" fill="#3c3f41" shape-rendering="crispEdges"/>
<rect x="1809" y="684" width="2" height="2" rx="0" fill="#3c3f41" shape-rendering="crispEdges"/>
<rect x="1809" y="687" width="2" height="2" rx="0" fill="#3c3f41" shape-rendering="crispEdges"/>
<rect x="1813" y="678" width="2" height="2" rx="0" fill="#3c3f41" shape-rendering="crispEdges"/>
<rect x="1813" y="681" width="2" height="2" rx="0" fill="#3c3f41" shape-rendering="crispEdges"/>
<rect x="1813" y="684" width="2" height="2" rx="0" fill="#3c3f41" shape-rendering="crispEdges"/>
<rect x="1813" y="687" width="2" height="2" rx="0" fill="#3c3f41" shape-rendering="crispEdges"/>
<rect x="1828.5" y="675.5" width="14" height="16" rx="0" fill="none" stroke="#9a9a9a" stroke-width="1"/>
<rect x="1831" y="679" width="8" height="1" fill="#9a9a9a" shape-rendering="crispEdges"/>
<rect x="1831" y="683" width="10" height="1" fill="#9a9a9a" shape-rendering="crispEdges"/>
<rect x="1831" y="687" width="8" height="1" fill="#9a9a9a" shape-rendering="crispEdges"/>
<path d="M1855.5 675.5H1865.5L1869.5 679.5V691.5H1855.5Z" fill="none" stroke="#9a9a9a" stroke-width="1" />
<rect x="1857" y="682" width="11" height="8" rx="0" fill="#4a8bcf" shape-rendering="crispEdges"/>
<path d="M1858 688L1861 685L1863 687L1866 683" fill="none" stroke="#2a4a70" stroke-width="1" />
<rect x="1631.5" y="1004.5" width="16" height="14" rx="0" fill="none" stroke="#6a6a6a" stroke-width="1"/>
<path d="M1634 1011H1644M1636 1009L1634 1011L1636 1013M1642 1009L1644 1011L1642 1013" fill="none" stroke="#6a6a6a" stroke-width="1" />
<rect x="1665" y="1004" width="12" height="4" rx="1" fill="#8a8a8a"/>
<rect x="1665" y="1009" width="12" height="4" rx="1" fill="#8a8a8a"/>
<rect x="1665" y="1014" width="12" height="4" rx="1" fill="#8a8a8a"/>
<path d="M1707.05 1008.525Q1704.35 1006.275 1701.2 1006.725Q1698.275 1007.85 1698.275 1011V1012.35" fill="none" stroke="#666666" stroke-width="2" />
<path d="M1698.95 1013.475Q1701.65 1015.725 1704.8 1015.275Q1707.725 1014.15 1707.725 1011V1009.65" fill="none" stroke="#666666" stroke-width="2" />
<path d="M1702.55 1004.25L1705.25 1006.725L1702.55 1009.2Z" fill="#666666" />
<path d="M1703.45 1017.75L1700.75 1015.275L1703.45 1012.8Z" fill="#666666" />
<path d="M1734.5 1003.5L1743.5 1018.5H1725.5Z" fill="none" stroke="#8a8a8a" stroke-width="1.2" />
<rect x="1734" y="1008" width="1" height="6" rx="0" fill="#8a8a8a" shape-rendering="crispEdges"/>
<rect x="1734" y="1015" width="1" height="1.5" rx="0" fill="#8a8a8a" shape-rendering="crispEdges"/>
<path d="M1905 1006H1917M1909 1006V1004H1913V1006" fill="none" stroke="#777" stroke-width="1.2" />
<path d="M1906.5 1007.5V1019.5H1915.5V1007.5" fill="none" stroke="#777" stroke-width="1.3" />
<rect x="1909" y="1009" width="1" height="9" fill="#777" shape-rendering="crispEdges"/>
<rect x="1912" y="1009" width="1" height="9" fill="#777" shape-rendering="crispEdges"/>
<path d="M1887.5 188.5H1897.5L1901.5 192.5V203.5H1887.5Z" fill="none" stroke="#8a8a8a" stroke-width="1" />
<rect x="1890" y="193" width="8" height="1" fill="#8a8a8a" shape-rendering="crispEdges"/>
<rect x="1890" y="196" width="8" height="1" fill="#8a8a8a" shape-rendering="crispEdges"/>
<rect x="1890" y="199" width="8" height="1" fill="#8a8a8a" shape-rendering="crispEdges"/>
<rect x="1885.5" y="314.5" width="6" height="5" rx="0" fill="none" stroke="#8a8a8a" stroke-width="1"/>
<rect x="1897" y="310" width="6" height="5" rx="1" fill="#4a8bcf"/>
<rect x="1897.5" y="319.5" width="5" height="5" rx="0" fill="none" stroke="#8a8a8a" stroke-width="1"/>
<path d="M1891.5 316.5L1894 313M1891.5 316.5L1894 320Q1895 321.5 1897 321.5" fill="none" stroke="#8a8a8a" stroke-width="1" />
</svg>
<div class="t" style="left:57.00px;top:16.19px;font-size:17.5px;font-weight:400;color:#bbbbbb;font-family:'Liberation Sans';letter-spacing:-0.600px;">File</div>
<div class="t" style="left:107.00px;top:16.19px;font-size:17.5px;font-weight:400;color:#bbbbbb;font-family:'Liberation Sans';">Edit</div>
<div class="t" style="left:159.00px;top:16.19px;font-size:17.5px;font-weight:400;color:#bbbbbb;font-family:'Liberation Sans';letter-spacing:-0.300px;">View</div>
<div class="t" style="left:219.00px;top:16.19px;font-size:17.5px;font-weight:400;color:#bbbbbb;font-family:'Liberation Sans';letter-spacing:-0.257px;">Database</div>
<div class="t" style="left:316.00px;top:16.19px;font-size:17.5px;font-weight:400;color:#bbbbbb;font-family:'Liberation Sans';">SQL Commander</div>
<div class="t" style="left:476.00px;top:16.19px;font-size:17.5px;font-weight:400;color:#bbbbbb;font-family:'Liberation Sans';letter-spacing:0.450px;">Tools</div>
<div class="t" style="left:543.00px;top:16.19px;font-size:17.5px;font-weight:400;color:#bbbbbb;font-family:'Liberation Sans';letter-spacing:0.540px;">Window</div>
<div class="t" style="left:632.00px;top:16.19px;font-size:17.5px;font-weight:400;color:#bbbbbb;font-family:'Liberation Sans';">Help</div>
<div class="t" style="left:824.00px;top:16.19px;font-size:17.5px;font-weight:400;color:#a8a8a8;font-family:'Liberation Sans';letter-spacing:0.106px;">DbVisualizer Pro 24.1.1 - Untitled*</div>
<div class="t" style="left:16.00px;top:100.76px;font-size:18px;font-weight:400;color:#bbbbbb;font-family:'Liberation Sans';letter-spacing:0.028px;">&lt;Drop your favorite objects here&gt;</div>
<div class="t" style="left:41.00px;top:146.59px;font-size:18.2px;font-weight:700;color:#c8c8c8;font-family:'Liberation Sans';letter-spacing:-0.450px;">Databases</div>
<div class="t" style="left:186.00px;top:148.36px;font-size:17.3px;font-weight:400;color:#bbbbbb;font-family:'Liberation Sans';letter-spacing:0.300px;">Scripts</div>
<div class="t" style="left:25.00px;top:224.51px;font-size:18.3px;font-weight:700;color:#ffffff;font-family:'Liberation Sans';letter-spacing:-0.540px;">Connections</div>
<div class="t" style="left:51.00px;top:249.51px;font-size:18.3px;font-weight:700;color:#ffffff;font-family:'Liberation Sans';letter-spacing:-0.300px;">MySQL 8</div>
<div class="t" style="left:78.00px;top:276.19px;font-size:17.5px;font-weight:400;color:#bbbbbb;font-family:'Liberation Sans';letter-spacing:-0.113px;">Databases</div>
<div class="t" style="left:78.00px;top:301.19px;font-size:17.5px;font-weight:400;color:#bbbbbb;font-family:'Liberation Sans';letter-spacing:-0.225px;">DBA Views</div>
<div class="t" style="left:52.00px;top:326.19px;font-size:17.5px;font-weight:400;color:#bbbbbb;font-family:'Liberation Sans';letter-spacing:-0.200px;">PostgreSQL</div>
<div class="t" style="left:52.00px;top:351.19px;font-size:17.5px;font-weight:400;color:#bbbbbb;font-family:'Liberation Sans';letter-spacing:-0.500px;">SQL Server</div>
<div class="t" style="left:52.00px;top:376.19px;font-size:17.5px;font-weight:400;color:#bbbbbb;font-family:'Liberation Sans';letter-spacing:-0.150px;">MySQL 5</div>
<div class="t" style="left:-1.00px;top:791.19px;font-size:17.5px;font-weight:400;color:#bbbbbb;font-family:'Liberation Sans';letter-spacing:0.169px;">Select an object to setup filters</div>
<div class="t" style="left:255.00px;top:825.19px;font-size:17.5px;font-weight:400;color:#bbbbbb;font-family:'Liberation Sans';letter-spacing:-0.450px;">ANY</div>
<div class="t" style="left:324.00px;top:825.19px;font-size:17.5px;font-weight:400;color:#bbbbbb;font-family:'Liberation Sans';letter-spacing:-1.200px;">ALL</div>
<div class="t" style="left:35.00px;top:867.19px;font-size:17.5px;font-weight:400;color:#bbbbbb;font-family:'Liberation Sans';">Field</div>
<div class="t" style="left:78.00px;top:867.19px;font-size:17.5px;font-weight:400;color:#bbbbbb;font-family:'Liberation Sans';letter-spacing:0.788px;">Condition</div>
<div class="t" style="left:163.00px;top:867.19px;font-size:17.5px;font-weight:400;color:#bbbbbb;font-family:'Liberation Sans';">Value</div>
<div class="t" style="left:54.00px;top:917.19px;font-size:17.5px;font-weight:400;color:#bbbbbb;font-family:'Liberation Sans';letter-spacing:0.197px;">Select an object to setup filters</div>
<div class="t" style="left:406.00px;top:146.59px;font-size:18.2px;font-weight:700;color:#c8c8c8;font-family:'Liberation Sans';letter-spacing:0.082px;">1: Untitled*</div>
<div class="t" style="left:365.00px;top:226.19px;font-size:17.5px;font-weight:400;color:#bbbbbb;font-family:'Liberation Sans';letter-spacing:0.050px;">Database Connection</div>
<div class="t" style="left:843.00px;top:226.19px;font-size:17.5px;font-weight:400;color:#bbbbbb;font-family:'Liberation Sans';letter-spacing:-0.064px;">Sticky Database</div>
<div class="t" style="left:1285.00px;top:226.19px;font-size:17.5px;font-weight:400;color:#bbbbbb;font-family:'Liberation Sans';letter-spacing:-0.360px;">Schema</div>
<div class="t" style="left:1675.00px;top:225.19px;font-size:17.5px;font-weight:400;color:#bbbbbb;font-family:'Liberation Sans';letter-spacing:-0.129px;">Max Rows</div>
<div class="t" style="left:1776.00px;top:225.19px;font-size:17.5px;font-weight:400;color:#bbbbbb;font-family:'Liberation Sans';letter-spacing:-0.113px;">Max Chars</div>
<div class="t" style="left:399.00px;top:260.19px;font-size:17.5px;font-weight:400;color:#bbbbbb;font-family:'Liberation Sans';">MySQL 8</div>
<div class="t" style="left:1686.00px;top:260.19px;font-size:17.5px;font-weight:400;color:#bbbbbb;font-family:'Liberation Sans';letter-spacing:0.600px;">1000</div>
<div class="t" style="left:1789.00px;top:260.19px;font-size:17.5px;font-weight:400;color:#bbbbbb;font-family:'Liberation Sans';letter-spacing:-0.800px;">-1</div>
<div class="t" style="left:381.00px;top:291.20px;font-size:16.7px;font-weight:400;color:#6e7275;font-family:'Liberation Mono';">1</div>
<div class="t" style="left:399.00px;top:291.22px;font-size:16.67px;font-weight:400;color:#bcbec4;font-family:'Liberation Mono';"><span style="color:#cf8e6d">SELECT CAST</span>(<span style="color:#2aacb8">3</span> <span style="color:#cf8e6d">AS DECIMAL</span>);</div>
<div class="t" style="left:369.00px;top:584.19px;font-size:17.5px;font-weight:400;color:#bbbbbb;font-family:'Liberation Sans';letter-spacing:0.540px;">1 / 27</div>
<div class="t" style="left:426.00px;top:584.19px;font-size:17.5px;font-weight:400;color:#bbbbbb;font-family:'Liberation Sans';letter-spacing:0.300px;">[26]</div>
<div class="t" style="left:470.00px;top:584.19px;font-size:17.5px;font-weight:400;color:#bbbbbb;font-family:'Liberation Sans';letter-spacing:-0.800px;">INS</div>
<div class="t" style="left:1521.00px;top:585.19px;font-size:17.5px;font-weight:400;color:#bbbbbb;font-family:'Liberation Sans';letter-spacing:-1.200px;">LF</div>
<div class="t" style="left:1552.00px;top:584.19px;font-size:17.5px;font-weight:400;color:#bbbbbb;font-family:'Liberation Sans';letter-spacing:0.514px;">Auto Commit: ON</div>
<div class="t" style="left:1709.00px;top:584.19px;font-size:17.5px;font-weight:400;color:#bbbbbb;font-family:'Liberation Sans';letter-spacing:0.180px;">Cp1252</div>
<div class="t" style="left:1784.00px;top:584.19px;font-size:17.5px;font-weight:400;color:#bbbbbb;font-family:'Liberation Sans';letter-spacing:0.562px;">Untitled*</div>
<div class="t" style="left:405.00px;top:631.19px;font-size:17.5px;font-weight:400;color:#bbbbbb;font-family:'Liberation Sans';letter-spacing:0.900px;">Log</div>
<div class="t" style="left:494.00px;top:630.93px;font-size:17.8px;font-weight:700;color:#c8c8c8;font-family:'Liberation Sans';letter-spacing:-0.377px;">1: SELECT CAST(3 AS DECIMAL) [1]</div>
<div class="t" style="left:383.00px;top:721.19px;font-size:17.5px;font-weight:400;color:#bbbbbb;font-family:'Liberation Sans';">*</div>
<div class="t" style="left:381.00px;top:755.19px;font-size:17.5px;font-weight:700;color:#c8c8c8;font-family:'Liberation Sans';">1</div>
<div class="t" style="left:404.00px;top:720.19px;font-size:17.5px;font-weight:400;color:#bbbbbb;font-family:'Liberation Sans';letter-spacing:-0.529px;">CAST(3 AS DECIMAL)</div>
<div class="t" style="left:611.00px;top:754.19px;font-size:17.5px;font-weight:400;color:#ffffff;font-family:'Liberation Sans';">3</div>
<div class="t" style="left:367.00px;top:973.19px;font-size:17.5px;font-weight:400;color:#bbbbbb;font-family:'Liberation Sans';letter-spacing:0.257px;">Decimal Number:</div>
<div class="t" style="left:509.00px;top:974.19px;font-size:17.5px;font-weight:400;color:#589df6;font-family:'Liberation Sans';letter-spacing:0.720px;">Unformatted</div>
<div class="t" style="left:1602.00px;top:973.19px;font-size:17.5px;font-weight:400;color:#bbbbbb;font-family:'Liberation Sans';letter-spacing:0.064px;">0.003/0.001 sec</div>
<div class="t" style="left:1748.00px;top:973.19px;font-size:17.5px;font-weight:400;color:#bbbbbb;font-family:'Liberation Sans';letter-spacing:0.450px;">1/1</div>
<div class="t" style="left:1796.00px;top:973.19px;font-size:17.5px;font-weight:400;color:#bbbbbb;font-family:'Liberation Sans';letter-spacing:0.450px;">1/1</div>
<div class="t" style="left:1844.00px;top:973.19px;font-size:17.5px;font-weight:400;color:#bbbbbb;font-family:'Liberation Sans';">1-1</div>
<div class="t" style="left:1761.00px;top:1003.76px;font-size:18px;font-weight:400;color:#bbbbbb;font-family:'Liberation Sans';letter-spacing:0.225px;">128M of 2048M</div>
<div class="t" style="left:1880px;top:210px;font-size:17.5px;color:#bbbbbb;transform-origin:0 0;transform:translate(24px,0) rotate(90deg)">SQL Editor</div>
<div class="t" style="left:1880px;top:330px;font-size:17.5px;color:#bbbbbb;transform-origin:0 0;transform:translate(24px,0) rotate(90deg)">Query Builder</div>
</body></html>
